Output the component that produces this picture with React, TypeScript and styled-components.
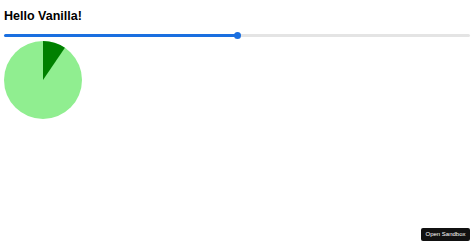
import React, { useState } from "react";
import styled, { createGlobalStyle } from "styled-components";

const Global = createGlobalStyle`
  html, body { margin: 0; padding: 0; background: #ffffff; }
  body { font-family: "Liberation Sans", Arial, sans-serif; }
`;

const Page = styled.main`
  display: flex;
  flex-direction: column;
  align-items: flex-start;
  padding: 8px 4px 0 4px;
`;

const Title = styled.h1`
  margin: 0;
  font-size: 12.5px;
  line-height: 16px;
  font-weight: 700;
  color: #000000;
`;

const Range = styled.input<{ $pct: number }>`
  -webkit-appearance: none;
  appearance: none;
  width: 466px;
  height: 7px;
  margin: 8px 0 2px 0;
  background: transparent;
  outline: none;

  &::-webkit-slider-runnable-track {
    height: 3px;
    border-radius: 2px;
    background: ${(p) =>
      `linear-gradient(to right, #1a6fe0 0%, #1a6fe0 ${p.$pct}%, #e4e4e4 ${p.$pct}%, #e4e4e4 100%)`};
    border: none;
  }
  &::-webkit-slider-thumb {
    -webkit-appearance: none;
    appearance: none;
    width: 7px;
    height: 7px;
    border-radius: 50%;
    background: #1a6fe0;
    margin-top: -2px;
    border: none;
  }
`;

const PieSvg = styled.svg`
  display: block;
  width: 78px;
  height: 78px;
`;

const SandboxButton = styled.button`
  position: fixed;
  right: 4px;
  bottom: 7px;
  width: 49px;
  height: 13px;
  padding: 0;
  border: none;
  border-radius: 2px;
  background: #111111;
  color: #ffffff;
  font-family: "Liberation Sans", Arial, sans-serif;
  font-size: 6px;
  line-height: 13px;
  text-align: center;
  cursor: pointer;
`;

function Pie({ fraction }: { fraction: number }) {
  const r = 39;
  const c = 39;
  const a = fraction * 2 * Math.PI;
  const x = c + r * Math.sin(a);
  const y = c - r * Math.cos(a);
  const large = fraction > 0.5 ? 1 : 0;
  return (
    <PieSvg viewBox="0 0 78 78">
      <circle cx={c} cy={c} r={r} fill="#90ee90" />
      <path d={`M ${c} ${c} L ${c} ${c - r} A ${r} ${r} 0 ${large} 1 ${x} ${y} Z`} fill="#008000" />
    </PieSvg>
  );
}

export default function App() {
  const [value, setValue] = useState(50);
  return (
    <>
      <Global />
      <Page>
        <Title>Hello Vanilla!</Title>
        <Range
          type="range"
          min={0}
          max={100}
          value={value}
          $pct={value}
          onChange={(e) => setValue(Number(e.target.value))}
        />
        <Pie fraction={0.095} />
      </Page>
      <SandboxButton>Open Sandbox</SandboxButton>
    </>
  );
}
